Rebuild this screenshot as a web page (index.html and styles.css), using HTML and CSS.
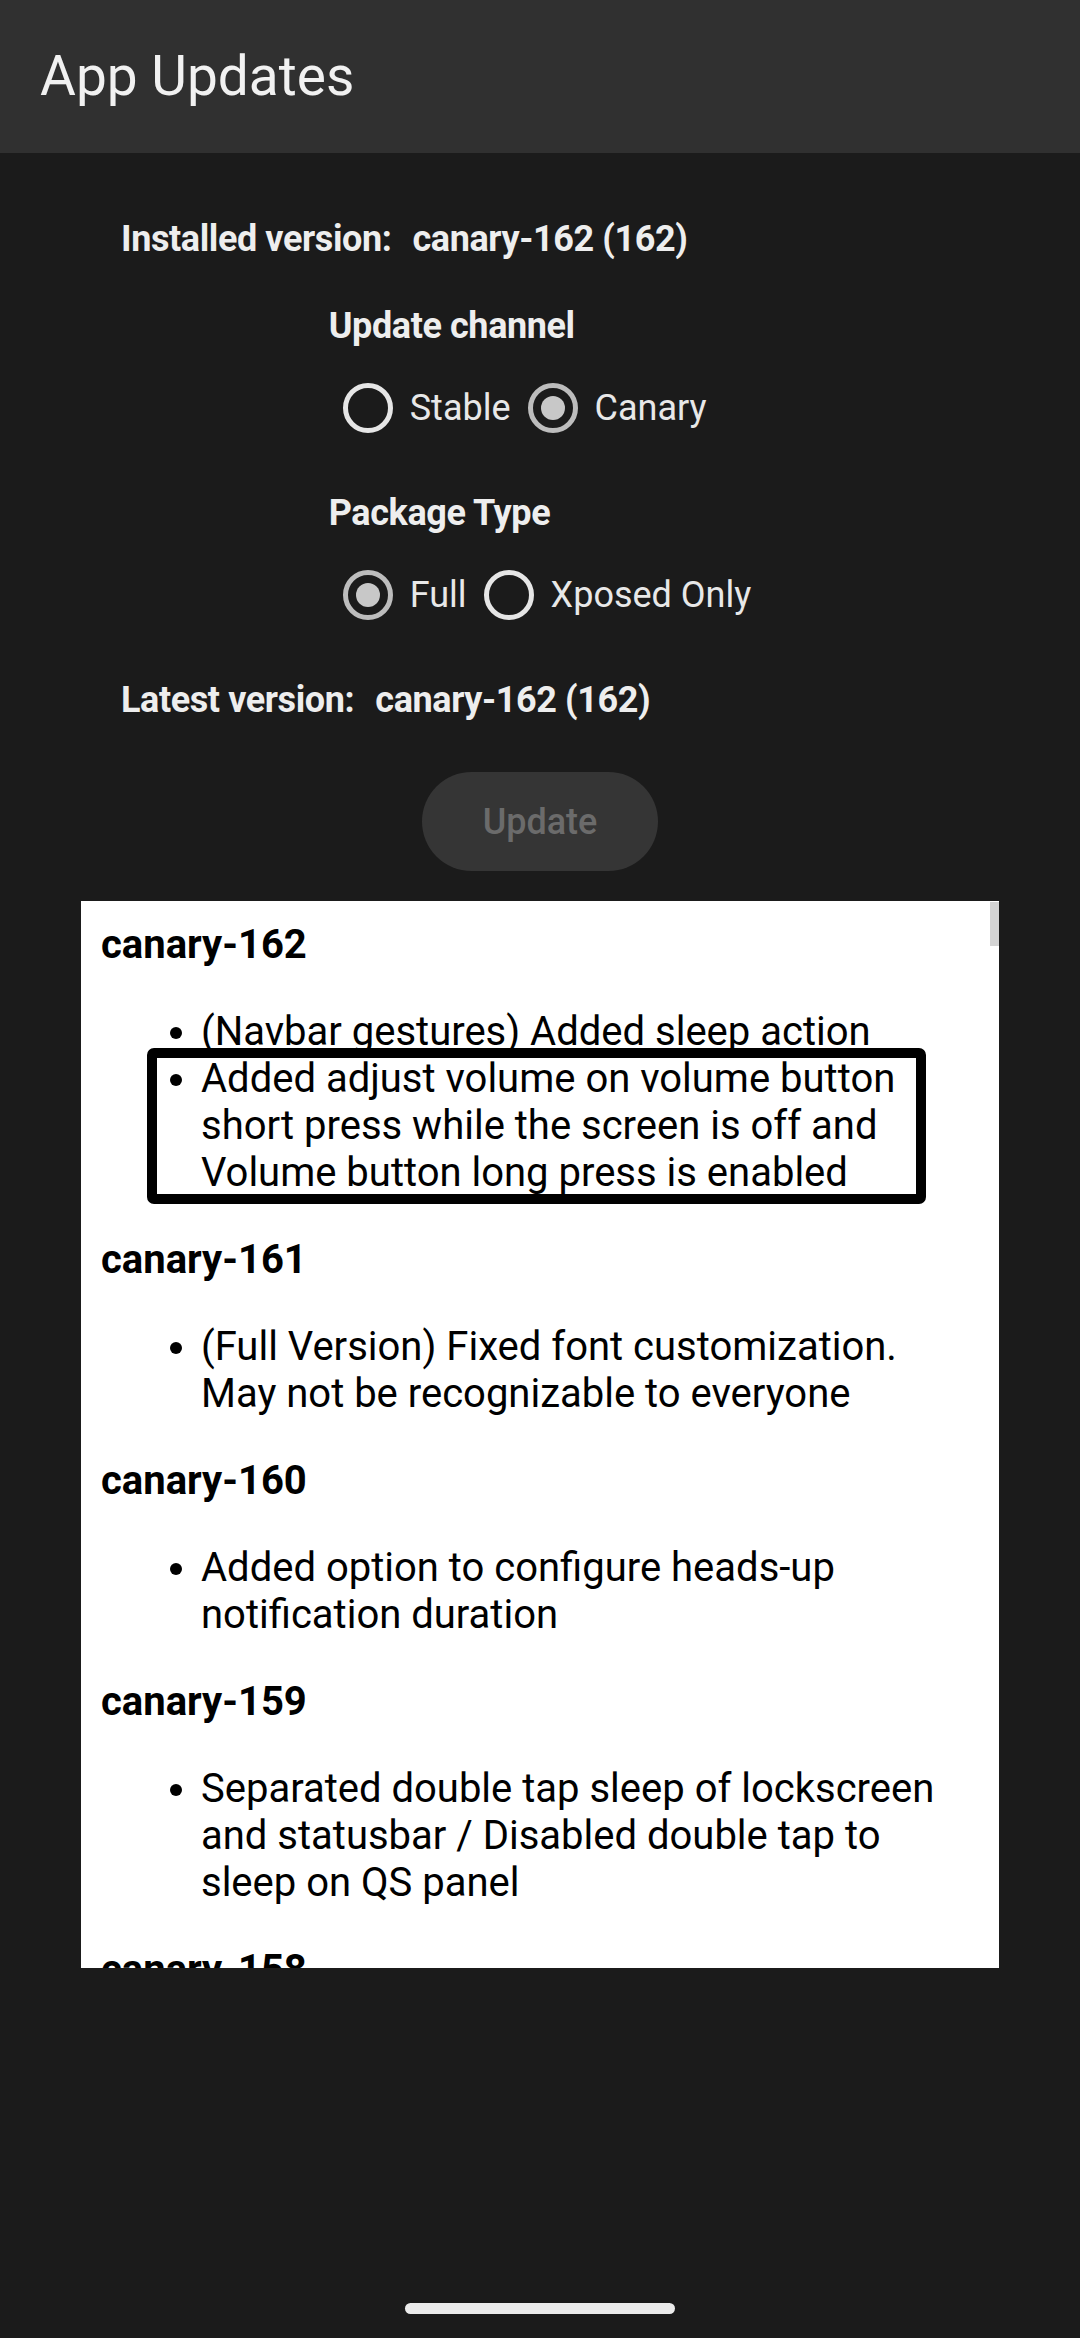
FILE: index.html
```html
<!DOCTYPE html>
<html lang="en">
<head>
<meta charset="utf-8">
<title>App Updates</title>
<link rel="stylesheet" href="styles.css">
</head>
<body>
<header class="appbar"><h1 class="appbar-title">App Updates</h1></header>
<main class="content">
  <div class="info-row installed"><span class="info-key">Installed version:</span><span class="info-val">canary-162 (162)</span></div>
  <section class="options">
    <div class="group-title first">Update channel</div>
    <div class="radio-row">
      <label class="radio"><span class="circle"></span><span class="radio-text">Stable</span></label>
      <label class="radio checked"><span class="circle"></span><span class="radio-text">Canary</span></label>
    </div>
    <div class="group-title second">Package Type</div>
    <div class="radio-row">
      <label class="radio checked"><span class="circle"></span><span class="radio-text">Full</span></label>
      <label class="radio"><span class="circle"></span><span class="radio-text">Xposed Only</span></label>
    </div>
  </section>
  <div class="info-row latest"><span class="info-key">Latest version:</span><span class="info-val">canary-162 (162)</span></div>
  <div class="btn-wrap"><button class="update-btn" disabled>Update</button></div>
  <div class="changelog">
    <h4 class="ver">canary-162</h4>
    <ul class="notes">
      <li>(Navbar gestures) Added sleep action</li>
      <li>Added adjust volume on volume button short press while the screen is off and Volume button long press is enabled</li>
    </ul>
    <h4 class="ver">canary-161</h4>
    <ul class="notes">
      <li>(Full Version) Fixed font customization. May not be recognizable to everyone</li>
    </ul>
    <h4 class="ver">canary-160</h4>
    <ul class="notes">
      <li>Added option to configure heads-up notification duration</li>
    </ul>
    <h4 class="ver">canary-159</h4>
    <ul class="notes">
      <li>Separated double tap sleep of lockscreen and statusbar / Disabled double tap to sleep on QS panel</li>
    </ul>
    <h4 class="ver">canary-158</h4>
    <div class="scrollbar"></div>
    <div class="highlight"></div>
  </div>
</main>
<div class="home-bar"></div>
</body>
</html>
```
FILE: styles.css
```css
html, body {
  margin: 0;
  padding: 0;
}
body {
  width: 1080px;
  height: 2338px;
  background: #1b1b1b;
  font-family: Roboto, "Noto Sans", "Liberation Sans", sans-serif;
  display: flex;
  flex-direction: column;
  overflow: hidden;
}
.appbar {
  height: 153px;
  background: #303030;
  flex-shrink: 0;
}
.appbar-title {
  margin: 0;
  padding-left: 40px;
  font-size: 55px;
  font-weight: 400;
  line-height: 153px;
  color: #f1f1f1;
}
.content {
  display: flex;
  flex-direction: column;
}
.info-row {
  display: flex;
  gap: 21px;
  padding-left: 121px;
  font-size: 36px;
  font-weight: 700;
  letter-spacing: -0.4px;
  line-height: 60px;
  color: #eeeeee;
}
.info-row.installed { margin-top: 56px; }
.info-row.latest { margin-top: 45px; }
.options {
  align-self: center;
  display: flex;
  flex-direction: column;
}
.group-title {
  font-size: 36px;
  font-weight: 700;
  letter-spacing: -0.4px;
  line-height: 60px;
  color: #eeeeee;
}
.group-title.first { margin-top: 27px; }
.group-title.second { margin-top: 45px; }
.radio-row {
  display: flex;
  align-items: center;
  height: 60px;
  padding-left: 14px;
  gap: 17px;
  margin-top: 22px;
}
.radio {
  display: flex;
  align-items: center;
  gap: 17px;
  font-size: 36px;
  line-height: 60px;
  color: #e8e8e8;
}
.circle {
  width: 50px;
  height: 50px;
  box-sizing: border-box;
  border: 5px solid #e6e6e6;
  border-radius: 50%;
  display: flex;
  align-items: center;
  justify-content: center;
}
.radio.checked .circle {
  border-color: #bdbdbd;
}
.radio.checked .circle::after {
  content: "";
  width: 24px;
  height: 24px;
  border-radius: 50%;
  background: #c8c8c8;
}
.btn-wrap {
  display: flex;
  justify-content: center;
  margin-top: 42px;
}
.update-btn {
  height: 99px;
  padding: 0 61px;
  border: none;
  border-radius: 50px;
  background: #353535;
  color: #6b6b6b;
  font-family: Roboto, "Noto Sans", sans-serif;
  font-size: 36px;
  font-weight: 500;
}
.changelog {
  position: relative;
  margin: 30px 81px 0;
  height: 1067px;
  box-sizing: border-box;
  padding: 20px 44px 0 20px;
  background: #ffffff;
  overflow: hidden;
  color: #000000;
}
.ver {
  margin: 0 0 40px;
  font-size: 40px;
  font-weight: 700;
  line-height: 47px;
}
.notes {
  margin: 0 0 40px;
  padding-left: 100px;
  font-size: 40px;
  line-height: 47px;
}
.scrollbar {
  position: absolute;
  top: 1px;
  right: 0;
  width: 9px;
  height: 44px;
  background: #d4d4d4;
}
.highlight {
  position: absolute;
  left: 66px;
  top: 147px;
  width: 779px;
  height: 156px;
  box-sizing: border-box;
  border: 10px solid #000000;
  border-radius: 7px;
}
.home-bar {
  margin: auto auto 24px;
  width: 270px;
  height: 11px;
  border-radius: 6px;
  background: #ececec;
  flex-shrink: 0;
}
```
